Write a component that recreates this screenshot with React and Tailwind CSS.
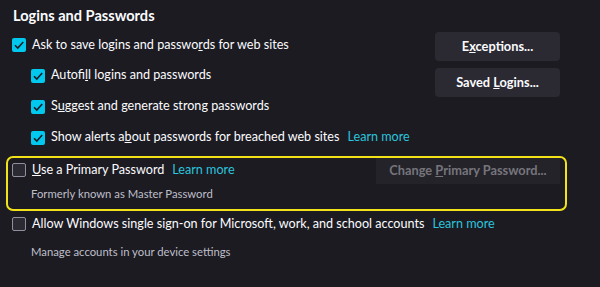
import React from "react";

function Box({ checked }) {
  if (checked) {
    return (
      <span className="flex h-[14px] w-[14px] shrink-0 items-center justify-center rounded-[2px] bg-[#00c8ee]">
        <svg width="12" height="12" viewBox="0 0 12 12" fill="none">
          <path d="M2 6.2 L4.8 9 L10.2 3" stroke="#1c1b22" strokeWidth="1.6" />
        </svg>
      </span>
    );
  }
  return <span className="h-[14px] w-[14px] shrink-0 rounded-[2px] border border-[#8f8f9d] bg-[#2b2a33]" />;
}

function Link() {
  return <span className="ml-[8px] text-[#2bc4dc]">Learn more</span>;
}

function Row({ checked, indent, h, children }) {
  return (
    <div className={`flex items-center gap-[6px] ${indent ? "pl-[19px]" : ""} ${h}`}>
      <Box checked={checked} />
      <span className="whitespace-nowrap">{children}</span>
    </div>
  );
}

function Btn({ children }) {
  return (
    <div className="flex h-[29px] w-[125px] items-center justify-center rounded-[4px] bg-[#2b2a33] text-[12.8px] font-bold text-[#fbfbfe]">
      <span>{children}</span>
    </div>
  );
}

export default function App() {
  return (
    <div
      className="h-[287px] w-[600px] overflow-hidden bg-[#1c1b22] pl-[12px] pr-[40px] text-[12.6px] text-[#fbfbfe]"
      style={{ fontFamily: 'Lato, "Noto Sans", sans-serif' }}
    >
      <div className="flex h-[30px] items-end pb-[3px] pl-[1px] text-[14.6px] font-bold">Logins and Passwords</div>

      <div className="flex justify-between">
        <div>
          <Row checked h="h-[30px]">
            Ask to save logins and passwo<u>r</u>ds for web sites
          </Row>
          <Row checked indent h="h-[31px]">
            Autofi<u>l</u>l logins and passwords
          </Row>
          <Row checked indent h="h-[31px]">
            S<u>u</u>ggest and generate strong passwords
          </Row>
          <Row checked indent h="h-[31px]">
            Show alerts a<u>b</u>out passwords for breached web sites
            <Link />
          </Row>
        </div>
        <div className="flex shrink-0 flex-col gap-[7px] pt-[2px]">
          <Btn>
            E<u>x</u>ceptions...
          </Btn>
          <Btn>
            Saved <u>L</u>ogins...
          </Btn>
        </div>
      </div>

      <div className="-ml-[6px] -mr-[7px] mt-[3px] h-[55px] rounded-[7px] border-2 border-[#f2e21a] pl-[4px] pr-[5px]">
        <div className="flex items-start justify-between">
          <Row h="h-[24px]">
            <u>U</u>se a Primary Password
            <Link />
          </Row>
          <div className="flex h-[26px] w-[184px] items-center justify-center bg-[#24232a] text-[12.8px] font-bold text-[#76757c]">
            <span>
              Change <u>P</u>rimary Password...
            </span>
          </div>
        </div>
        <div className="pl-[19px] pt-[2px] text-[11.3px] text-[#bfbfc9]">Formerly known as Master Password</div>
      </div>

      <div className="mt-[1px]">
        <Row h="h-[24px]">
          Allow Windows single sign-on for Microsoft, work, and school accounts
          <Link />
        </Row>
        <div className="pl-[19px] pt-[8px] text-[11.3px] text-[#bfbfc9]">Manage accounts in your device settings</div>
      </div>
    </div>
  );
}
